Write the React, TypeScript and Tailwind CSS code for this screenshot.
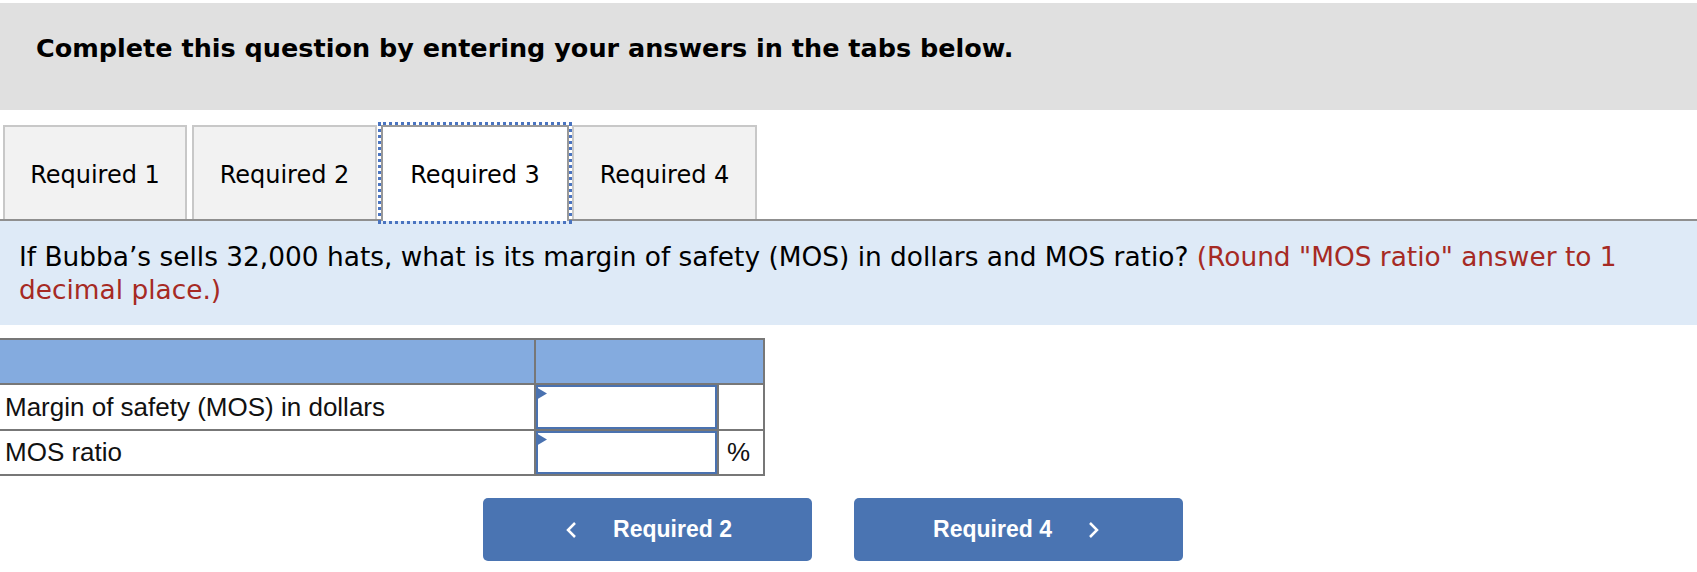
import React from "react";

const tabs = ["Required 1", "Required 2", "Required 3", "Required 4"];

function Flag() {
  return (
    <svg
      className="absolute left-0 top-[2px]"
      width="11"
      height="13"
      viewBox="0 0 11 13"
      aria-hidden
    >
      <polygon points="0,0 11,6.5 0,13" fill="#4a72b0" />
    </svg>
  );
}

function Chevron({ dir }: { dir: "left" | "right" }) {
  return (
    <svg width="11" height="16" viewBox="0 0 11 16" aria-hidden>
      <polyline
        points={dir === "left" ? "9,1 2,8 9,15" : "2,1 9,8 2,15"}
        fill="none"
        stroke="white"
        strokeWidth="2.5"
      />
    </svg>
  );
}

export default function App() {
  return (
    <div className="h-[572px] w-[1697px] overflow-hidden bg-white pt-[3px]">
      {/* header */}
      <div className="flex h-[107px] items-center bg-[#e0e0e0] pb-[17px] pl-[36px]">
        <h1 className="font-['DejaVu_Sans',sans-serif] text-[25.5px] font-bold text-black">
          Complete this question by entering your answers in the tabs below.
        </h1>
      </div>

      {/* tabs */}
      <div className="mt-[15px] flex h-[96px] border-b-2 border-[#8f8f8f] pl-[3px] font-['DejaVu_Sans',sans-serif] text-[24px] text-black">
        {tabs.map((t, i) => {
          const active = i === 2;
          const widths = ["w-[184px]", "ml-[5px] w-[185px]", "ml-[4px] w-[188px]", "ml-[3px] w-[185px]"];
          return (
            <div
              key={t}
              className={
                active
                  ? `${widths[i]} -mb-[2px] flex items-center justify-center border-x-2 border-t-2 border-[#999] bg-white pt-[2px] outline-[3px] outline-dotted outline-[#4a74c0]`
                  : `${widths[i]} flex items-center justify-center border-x-2 border-t-2 border-[#c8c8c8] bg-[#f2f2f2] pt-[3px]`
              }
            >
              {t}
            </div>
          );
        })}
      </div>

      {/* question */}
      <div className="h-[104px] bg-[#deeaf7] pl-[19px] pt-[20px] font-['DejaVu_Sans',sans-serif] text-[26.4px] leading-[32.5px] text-black">
        If Bubba’s sells 32,000 hats, what is its margin of safety (MOS) in dollars and MOS ratio?{" "}
        <span className="text-[#a62a24]">
          (Round "MOS ratio" answer to 1
          <br />
          decimal place.)
        </span>
      </div>

      {/* table */}
      <div className="mt-[13px] w-[765px] border-r-2 border-t-2 border-[#777] font-['Liberation_Sans',Arial,sans-serif] text-[26px] text-[#111]">
        <div className="flex h-[45px] border-b-2 border-[#777] bg-[#84abdf]">
          <div className="w-[536px] border-r-2 border-[#777]" />
          <div className="flex-1" />
        </div>
        <div className="flex h-[46px] border-b-2 border-[#777]">
          <div className="flex w-[536px] items-center border-r-2 border-[#777] pl-[5px]">
            Margin of safety (MOS) in dollars
          </div>
          <div className="relative w-[183px] border-r-2 border-[#777]">
            <div className="h-full w-full border-2 border-[#4a72b0] bg-white" />
            <Flag />
          </div>
          <div className="flex-1" />
        </div>
        <div className="flex h-[45px] border-b-2 border-[#777]">
          <div className="flex w-[536px] items-center border-r-2 border-[#777] pl-[5px]">
            MOS ratio
          </div>
          <div className="relative w-[183px] border-r-2 border-[#777]">
            <div className="h-full w-full border-2 border-[#4a72b0] bg-white" />
            <Flag />
          </div>
          <div className="flex flex-1 items-center pl-[8px]">%</div>
        </div>
      </div>

      {/* nav buttons */}
      <div className="mt-[22px] flex justify-center gap-[42px] pr-[32px] font-['Liberation_Sans',Arial,sans-serif] text-[23px] font-bold text-white">
        <button
          type="button"
          className="flex h-[63px] w-[329px] items-center justify-center gap-[36px] rounded-[5px] bg-[#4a74b2] pl-[4px]"
        >
          <Chevron dir="left" />
          Required 2
        </button>
        <button
          type="button"
          className="flex h-[63px] w-[329px] items-center justify-center gap-[36px] rounded-[5px] bg-[#4a74b2] pr-[4px]"
        >
          Required 4
          <Chevron dir="right" />
        </button>
      </div>
    </div>
  );
}
